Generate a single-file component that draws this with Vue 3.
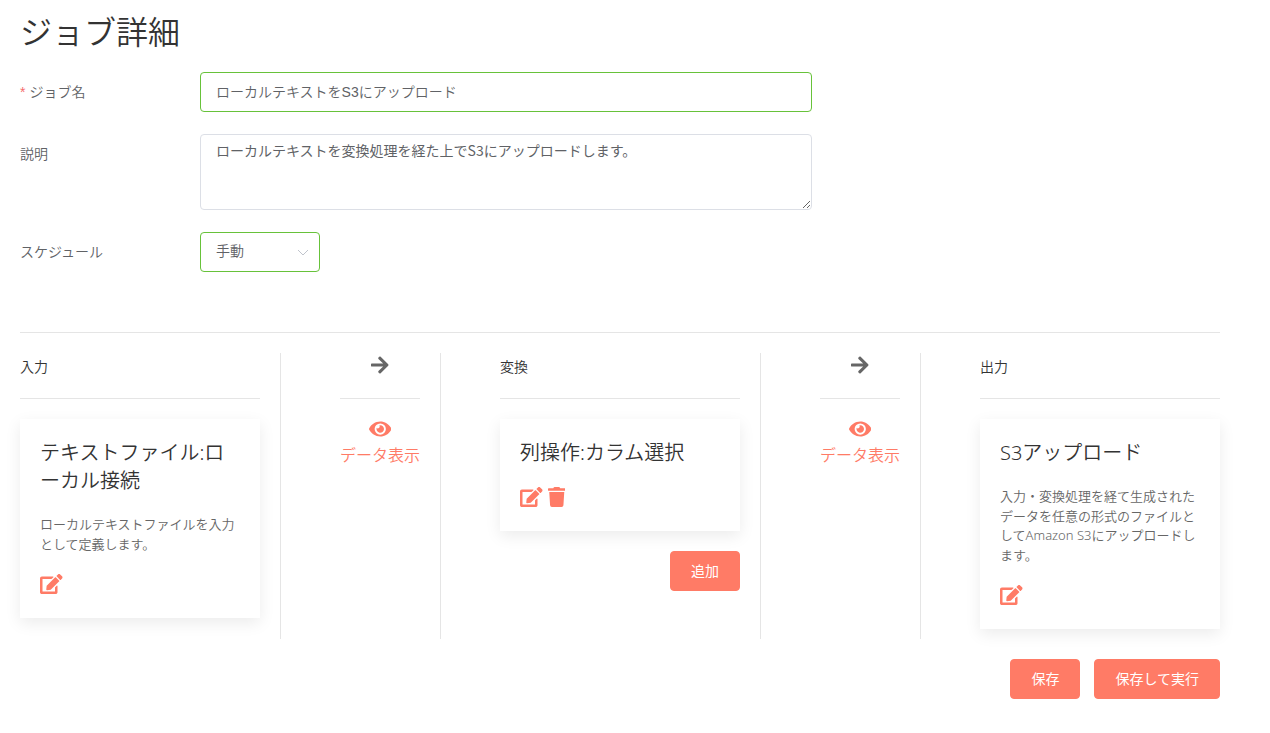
<template>
  <main class="job">
    <h1 class="job-title">ジョブ詳細</h1>

    <form class="job-form" @submit.prevent>
      <div class="form-item">
        <label class="form-label required" for="job-name">ジョブ名</label>
        <input id="job-name" v-model="job.name" class="field valid" type="text" required>
      </div>
      <div class="form-item">
        <label class="form-label" for="job-description">説明</label>
        <textarea id="job-description" v-model="job.description" class="field field-area"></textarea>
      </div>
      <div class="form-item">
        <label class="form-label" for="job-schedule">スケジュール</label>
        <div class="select-wrap">
          <select id="job-schedule" v-model="job.schedule" class="field valid">
            <option value="manual">手動</option>
            <option value="daily">毎日</option>
          </select>
          <svg class="select-arrow" viewBox="0 0 14 14" fill="none" stroke="currentColor">
            <path d="M2 5l5 5 5-5"/>
          </svg>
        </div>
      </div>
    </form>

    <section class="flow">
      <div
        v-for="(step, index) in steps"
        :key="index"
        class="step"
        :class="step.type === 'arrow' ? 'step-arrow' : 'step-main'"
      >
        <template v-if="step.type === 'arrow'">
          <div class="step-head">
            <svg class="icon icon-arrow" viewBox="0 0 448 512" fill="currentColor">
              <path :d="icons.arrow"/>
            </svg>
          </div>
          <a class="preview" href="#" @click.prevent>
            <svg class="icon" viewBox="0 0 576 512" fill="currentColor">
              <path :d="icons.eye"/>
            </svg>
            <span>データ表示</span>
          </a>
        </template>

        <template v-else>
          <h2 class="step-head">{{ step.title }}</h2>
          <article class="card">
            <h3 class="card-title">{{ step.name }}</h3>
            <p v-if="step.description" class="card-text">{{ step.description }}</p>
            <div class="card-actions">
              <button class="icon-btn" type="button" aria-label="編集">
                <svg class="icon" viewBox="0 0 576 512" fill="currentColor">
                  <path :d="icons.edit"/>
                </svg>
              </button>
              <button v-if="step.removable" class="icon-btn" type="button" aria-label="削除">
                <svg class="icon" viewBox="0 0 448 512" fill="currentColor">
                  <path :d="icons.trash"/>
                </svg>
              </button>
            </div>
          </article>
          <div v-if="step.removable" class="step-footer">
            <button class="btn" type="button">追加</button>
          </div>
        </template>
      </div>
    </section>

    <div class="job-actions">
      <button class="btn" type="button">保存</button>
      <button class="btn" type="button">保存して実行</button>
    </div>
  </main>
</template>

<script setup>
import { reactive } from 'vue'

const job = reactive({
  name: 'ローカルテキストをS3にアップロード',
  description: 'ローカルテキストを変換処理を経た上でS3にアップロードします。',
  schedule: 'manual'
})

const steps = [
  {
    type: 'input',
    title: '入力',
    name: 'テキストファイル:ローカル接続',
    description: 'ローカルテキストファイルを入力として定義します。'
  },
  { type: 'arrow' },
  { type: 'transform', title: '変換', name: '列操作:カラム選択', removable: true },
  { type: 'arrow' },
  {
    type: 'output',
    title: '出力',
    name: 'S3アップロード',
    description: '入力・変換処理を経て生成されたデータを任意の形式のファイルとしてAmazon S3にアップロードします。'
  }
]

const icons = {
  arrow: 'M190.5 66.9l22.2-22.2c9.4-9.4 24.6-9.4 33.9 0L441 239c9.4 9.4 9.4 24.6 0 33.9L246.6 467.3c-9.4 9.4-24.6 9.4-33.9 0l-22.2-22.2c-9.5-9.5-9.3-25 .4-34.3L311.4 296H24c-13.3 0-24-10.7-24-24v-32c0-13.3 10.7-24 24-24h287.4L190.9 101.2c-9.8-9.3-10-24.8-.4-34.3z',
  eye: 'M572.52 241.4C518.29 135.59 410.93 64 288 64S57.68 135.64 3.48 241.41a32.35 32.35 0 0 0 0 29.19C57.71 376.41 165.07 448 288 448s230.32-71.64 284.52-177.41a32.35 32.35 0 0 0 0-29.19zM288 400a144 144 0 1 1 144-144 143.93 143.93 0 0 1-144 144zm0-240a95.31 95.31 0 0 0-25.31 3.79 47.85 47.85 0 0 1-66.9 66.9A95.78 95.78 0 1 0 288 160z',
  edit: 'M402.6 83.2l90.2 90.2c3.8 3.8 3.8 10 0 13.8L274.4 405.6l-92.8 10.3c-12.4 1.4-22.9-9.1-21.5-21.5l10.3-92.8L388.8 83.2c3.8-3.8 10-3.8 13.8 0zm162-22.9l-48.8-48.8c-15.2-15.2-39.9-15.2-55.2 0l-35.4 35.4c-3.8 3.8-3.8 10 0 13.8l90.2 90.2c3.8 3.8 10 3.8 13.8 0l35.4-35.4c15.2-15.3 15.2-40 0-55.2zM384 346.2V448H64V128h229.8c3.2 0 6.2-1.3 8.5-3.5l40-40c7.6-7.6 2.2-20.5-8.5-20.5H48C21.5 64 0 85.5 0 112v352c0 26.5 21.5 48 48 48h352c26.5 0 48-21.5 48-48V306.2c0-10.7-12.9-16-20.5-8.5l-40 40c-2.2 2.3-3.5 5.3-3.5 8.5z',
  trash: 'M432 32H312l-9.4-18.7A24 24 0 0 0 281.1 0H166.8a23.72 23.72 0 0 0-21.4 13.3L136 32H16A16 16 0 0 0 0 48v32a16 16 0 0 0 16 16h416a16 16 0 0 0 16-16V48a16 16 0 0 0-16-16zM53.2 467a48 48 0 0 0 47.9 45h245.8a48 48 0 0 0 47.9-45L416 128H32z'
}
</script>

<style>
body {
  background: #fff;
}
</style>

<style scoped>
.job {
  padding: 8px 50px 34px 20px;
  color: #666;
  font-family: "Noto Sans", "Noto Sans CJK JP", sans-serif;
  font-size: 16px;
  font-weight: 350;
  line-height: 24px;
}

.job *,
.job {
  box-sizing: border-box;
}

.job-title {
  margin: 0 0 16px;
  color: #333;
  font-size: 32px;
  font-weight: 350;
  line-height: 48px;
}

.job-form {
  display: flex;
  flex-direction: column;
  gap: 22px;
  width: 66%;
  padding-bottom: 60px;
}

.form-item {
  display: flex;
  align-items: flex-start;
}

.form-label {
  flex: 0 0 180px;
  color: #606266;
  font-size: 14px;
  line-height: 40px;
}

.required::before {
  content: "*";
  margin-right: 4px;
  color: #f56c6c;
  font-family: "Liberation Sans", sans-serif;
}

.field {
  flex: 1;
  width: 100%;
  height: 40px;
  margin: 0;
  padding: 0 15px 2px;
  border: 1px solid #dcdfe6;
  border-radius: 4px;
  outline: none;
  background: #fff;
  color: #606266;
  font-family: "Liberation Sans", "Noto Sans CJK JP", sans-serif;
  font-size: 14px;
  font-weight: 350;
}

.field.valid {
  border-color: #67c23a;
}

.field-area {
  height: 76px;
  padding: 5px 15px;
  font-family: "Liberation Sans Narrow", "Noto Sans CJK JP", monospace;
  font-weight: 400;
  line-height: 21px;
  resize: vertical;
}

.select-wrap {
  position: relative;
  width: 120px;
}

.select-wrap .field {
  display: block;
  appearance: none;
}

.select-arrow {
  position: absolute;
  top: 13px;
  right: 10px;
  width: 14px;
  height: 14px;
  color: #c0c4cc;
  pointer-events: none;
}

.flow {
  display: flex;
  gap: 59px;
  padding-top: 20px;
  border-top: 1px solid #e5e5e5;
}

.step {
  box-sizing: content-box;
  min-width: 0;
  padding: 0 20px 10px 0;
  border-right: 1px solid #e5e5e5;
}

.step:last-child {
  padding-right: 0;
  border-right: none;
}

.step-main {
  flex: 3 1 0;
}

.step-arrow {
  flex: 1 1 0;
}

.step-head {
  height: 46px;
  margin: 0 0 20px;
  padding-top: 2px;
  border-bottom: 1px solid #e5e5e5;
  color: #333;
  font-size: 14px;
  font-weight: 350;
}

.step-arrow .step-head {
  color: #666;
  text-align: center;
}

.icon {
  display: block;
  height: 20px;
}

.icon-arrow {
  margin: 0 auto;
}

.preview {
  display: flex;
  flex-direction: column;
  align-items: center;
  gap: 4px;
  color: #ff7b66;
  line-height: 24px;
  text-decoration: none;
  white-space: nowrap;
}

.card {
  padding: 20px;
  background: #fff;
  box-shadow: 0 5px 15px rgba(0, 0, 0, 0.08);
}

.card-title {
  margin: 0 0 20px;
  color: #333;
  font-size: 20px;
  font-weight: 350;
  line-height: 28px;
  line-break: anywhere;
}

.card-text {
  margin: 0 0 20px;
  font-size: 13px;
  line-height: 1.5;
}

.card-actions {
  display: flex;
  align-items: flex-start;
  gap: 5px;
  height: 24px;
}

.icon-btn {
  padding: 0;
  border: none;
  background: none;
  color: #ff7b66;
  cursor: pointer;
}

.step-footer {
  display: flex;
  justify-content: flex-end;
  margin-top: 20px;
}

.btn {
  height: 40px;
  padding: 0 20px 3px;
  border: 1px solid #ff7b66;
  border-radius: 4px;
  background: #ff7b66;
  color: #fff;
  font-family: inherit;
  font-size: 14px;
  font-weight: 400;
  cursor: pointer;
}

.job-actions {
  display: flex;
  justify-content: flex-end;
  gap: 14px;
  margin-top: 20px;
}
</style>
